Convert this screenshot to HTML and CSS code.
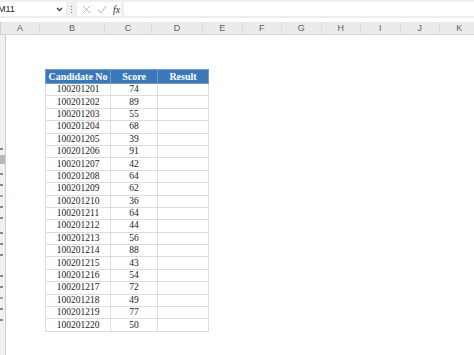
FILE: index.html
```html
<!DOCTYPE html>
<html lang="en">
<head>
    <meta charset="UTF-8">
    <title>Candidate Scores</title>
    <link rel="stylesheet" href="styles.css">
</head>
<body>
    <div class="formula-bar">
        <div class="name-box">
            <span class="cell-ref">M11</span>
            <svg class="chevron" width="7" height="5" viewBox="0 0 7 5"><path d="M1 1l2.5 2.5L6 1" fill="none" stroke="#444" stroke-width="1.4"/></svg>
        </div>
        <div class="grip">
            <span></span><span></span><span></span>
        </div>
        <div class="fx-buttons">
            <svg width="9" height="9" viewBox="0 0 9 9"><path d="M1 1l7 7M8 1l-7 7" stroke="#b8b8b8" stroke-width="1"/></svg>
            <svg width="10" height="9" viewBox="0 0 10 9"><path d="M1 5l3 3 5-7" fill="none" stroke="#b8b8b8" stroke-width="1"/></svg>
            <span class="fx">fx</span>
        </div>
        <div class="formula-input"></div>
    </div>

    <div class="col-headers">
        <div class="corner"></div>
        <div class="col w-a">A</div>
        <div class="col w-b">B</div>
        <div class="col w-c">C</div>
        <div class="col w-d">D</div>
        <div class="col w-e">E</div>
        <div class="col w-e">F</div>
        <div class="col w-e">G</div>
        <div class="col w-e">H</div>
        <div class="col w-e">I</div>
        <div class="col w-e">J</div>
        <div class="col w-e">K</div>
    </div>

    <div class="sheet">
        <div class="row-strip">
            <span class="mark m1"></span>
            <span class="mark sel"></span>
            <span class="mark"></span>
            <span class="mark"></span>
            <span class="mark blue"></span>
            <span class="mark"></span>
            <span class="mark"></span>
            <span class="mark m2"></span>
            <span class="mark"></span>
            <span class="mark"></span>
            <span class="mark m3"></span>
            <span class="mark"></span>
            <span class="mark blue"></span>
            <span class="mark"></span>
            <span class="mark"></span>
        </div>
        <div class="grid-area">
            <table class="scores">
                <thead>
                    <tr><th class="w-b">Candidate No</th><th class="w-c">Score</th><th class="w-d">Result</th></tr>
                </thead>
                <tbody>
                    <tr><td>100201201</td><td>74</td><td></td></tr>
                    <tr><td>100201202</td><td>89</td><td></td></tr>
                    <tr><td>100201203</td><td>55</td><td></td></tr>
                    <tr><td>100201204</td><td>68</td><td></td></tr>
                    <tr><td>100201205</td><td>39</td><td></td></tr>
                    <tr><td>100201206</td><td>91</td><td></td></tr>
                    <tr><td>100201207</td><td>42</td><td></td></tr>
                    <tr><td>100201208</td><td>64</td><td></td></tr>
                    <tr><td>100201209</td><td>62</td><td></td></tr>
                    <tr><td>100201210</td><td>36</td><td></td></tr>
                    <tr><td>100201211</td><td>64</td><td></td></tr>
                    <tr><td>100201212</td><td>44</td><td></td></tr>
                    <tr><td>100201213</td><td>56</td><td></td></tr>
                    <tr><td>100201214</td><td>88</td><td></td></tr>
                    <tr><td>100201215</td><td>43</td><td></td></tr>
                    <tr><td>100201216</td><td>54</td><td></td></tr>
                    <tr><td>100201217</td><td>72</td><td></td></tr>
                    <tr><td>100201218</td><td>49</td><td></td></tr>
                    <tr><td>100201219</td><td>77</td><td></td></tr>
                    <tr><td>100201220</td><td>50</td><td></td></tr>
                </tbody>
            </table>
        </div>
    </div>
</body>
</html>
```

FILE: styles.css
```css
body {
    margin: 0;
    background-color: #ffffff;
    font-family: 'Liberation Sans', Arial, sans-serif;
    width: 474px;
    height: 355px;
    overflow: hidden;
}

.formula-bar {
    display: flex;
    align-items: stretch;
    height: 14px;
    padding: 2px 0 2px 0;
    background-color: #efefef;
}

.name-box {
    display: flex;
    align-items: center;
    justify-content: space-between;
    width: 66px;
    padding-right: 3px;
    box-sizing: border-box;
    background-color: #ffffff;
    font-size: 9px;
    color: #222222;
}

.cell-ref {
    margin-left: -2px;
}

.grip {
    display: flex;
    flex-direction: column;
    justify-content: center;
    gap: 2px;
    width: 11px;
    align-items: center;
}

.grip span {
    width: 1px;
    height: 1px;
    background-color: #777777;
}

.fx-buttons {
    display: flex;
    align-items: center;
    gap: 6px;
    width: 44px;
    padding-left: 5px;
    box-sizing: border-box;
    background-color: #ffffff;
    margin-right: 3px;
}

.fx {
    font-family: 'Liberation Serif', serif;
    font-style: italic;
    font-size: 10px;
    color: #333333;
}

.formula-input {
    flex: 1;
    background-color: #ffffff;
}

.col-headers {
    display: flex;
    height: 12px;
    margin-top: 4px;
    background-color: #ebebeb;
    border-bottom: 1px solid #d4d4d4;
    font-size: 9px;
    color: #606060;
}

.corner {
    width: 5px;
    border-right: 1px solid #cfcfcf;
}

.col {
    display: flex;
    align-items: center;
    justify-content: center;
    box-sizing: border-box;
    border-right: 1px solid #dddddd;
    flex-shrink: 0;
}

.col.w-a { width: 39px; }
.col.w-b { width: 65px; }
.col.w-c { width: 47px; }
.col.w-d { width: 51px; }
.col.w-e { width: 39.5px; }

.sheet {
    display: flex;
    height: 321px;
}

.row-strip {
    display: flex;
    flex-direction: column;
    gap: 9px;
    width: 5px;
    padding-top: 113px;
    background-color: #f0f0f0;
    border-right: 1px solid #cfcfcf;
}

.mark {
    width: 3px;
    height: 2px;
    background-color: #8a8a8a;
}

.mark.m1 { margin-top: 0; }
.mark.sel { width: 5px; height: 9px; background-color: #b9b9b9; margin-top: -4px; }
.mark.blue { background-color: #8aa3c7; }
.mark.m2 { margin-top: 4px; }
.mark.m3 { margin-top: 10px; }

.grid-area {
    padding: 34px 0 0 39px;
}

.scores {
    border-collapse: collapse;
    font-family: 'Liberation Serif', 'Times New Roman', serif;
    font-size: 9.5px;
    color: #222222;
    table-layout: fixed;
    width: 162px;
}

.scores th {
    background-color: #3b78b9;
    color: #ffffff;
    font-weight: bold;
    font-size: 10px;
    height: 13px;
    padding: 0;
    border: 1px solid #6f9ccd;
    line-height: 11px;
}

.scores th.w-b { width: 64px; }
.scores th.w-c { width: 46px; }
.scores th.w-d { width: 50px; }

.scores td {
    height: 11.4px;
    padding: 0;
    text-align: center;
    border: 1px solid #dcdcdc;
    line-height: 11px;
}
```
